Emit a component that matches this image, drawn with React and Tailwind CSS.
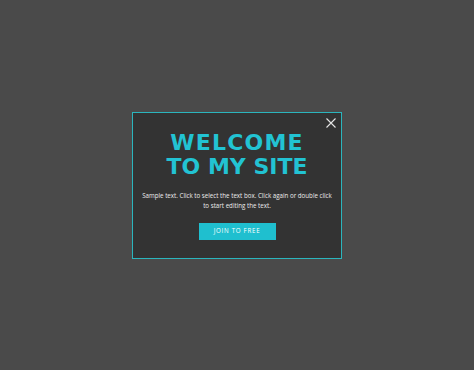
export default function App() {
  return (
    <div className="w-[474px] h-[370px] bg-[#4a4a4a] flex items-center justify-center">
      <div className="relative w-[210px] h-[147px] bg-[#333333] border border-[#2bb5bd] flex flex-col items-center pt-[18px]">
        <button className="absolute right-[5px] top-[5px] w-[11px] h-[11px] flex items-center justify-center">
          <svg width="10" height="10" viewBox="0 0 10 10" fill="none" stroke="#e6e6e6" strokeWidth="1.1">
            <path d="M0.5 0.5 L9.5 9.5 M9.5 0.5 L0.5 9.5" />
          </svg>
        </button>
        <h1
          className="text-[#22c3d3] font-bold text-center leading-[24px] text-[22px]"
          style={{ fontFamily: '"DejaVu Sans", "Open Sans", sans-serif' }}
        >
          <span className="tracking-[1.2px]">WELCOME</span>
          <br />
          TO MY SITE
        </h1>
        <p
          className="mt-[12px] text-[#ececec] text-[6.2px] leading-[10px] text-center whitespace-nowrap"
          style={{ fontFamily: '"Open Sans", sans-serif' }}
        >
          Sample text. Click to select the text box. Click again or double click
          <br />
          to start editing the text.
        </p>
        <div
          className="mt-[12px] w-[77px] h-[17px] bg-[#1fbfcf] flex items-center justify-center text-white text-[6.2px] tracking-[0.7px] font-medium"
          style={{ fontFamily: '"Open Sans", sans-serif' }}
        >
          JOIN TO FREE
        </div>
      </div>
    </div>
  );
}
